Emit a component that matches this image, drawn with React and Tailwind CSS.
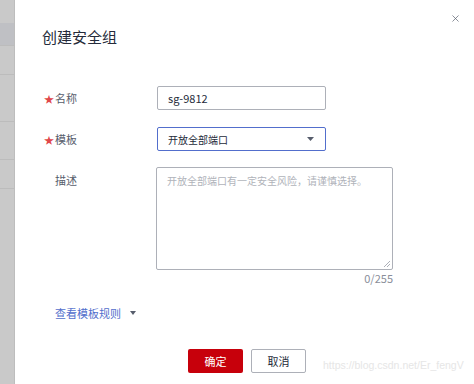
import { X } from 'lucide-react';

const font = { fontFamily: '"Noto Sans CJK SC", "Noto Sans", sans-serif' };

function Label({ required, children }) {
  return (
    <div className="flex w-[142px] shrink-0 items-center pl-[29px] text-[11px] text-[#575d6c]">
      <span className="w-[11px] text-[10px] text-[#e0474a]">{required ? '★' : ''}</span>
      <span>{children}</span>
    </div>
  );
}

export default function App() {
  return (
    <div className="relative flex h-[384px] w-[474px] overflow-hidden bg-white" style={font}>
      {/* backdrop strip of page underneath */}
      <div className="flex w-[15px] shrink-0 flex-col border-r border-[#bdbdbd] bg-[#c9c9c9]">
        <div className="mt-[23px] h-[23px] border-b border-[#bcbcbc] bg-[#bfc0c4]" />
        <div className="h-[29px] border-b border-[#bcbcbc]" />
        <div className="h-[47px] border-b border-[#bcbcbc]" />
        <div className="h-[38px] border-b border-[#bcbcbc]" />
        <div className="h-[29px] border-b border-[#bcbcbc]" />
      </div>

      <div className="flex min-w-0 flex-1 flex-col">
        <div className="pl-[27px] pt-[25px] text-[15px] leading-[24px] text-[#252b3a]">创建安全组</div>

        <div className="mt-[37px] flex h-[24px] items-center">
          <Label required>名称</Label>
          <div className="flex h-[24px] w-[169px] items-center rounded-[2px] border border-[#adb0b8] px-[10px] text-[11px] text-[#252b3a]">
            sg-9812
          </div>
        </div>

        <div className="mt-[17px] flex h-[24px] items-center">
          <Label required>模板</Label>
          <div className="flex h-[24px] w-[169px] items-center justify-between rounded-[2px] border border-[#526ecc] px-[10px] text-[10px] text-[#252b3a]">
            <span>开放全部端口</span>
            <svg width="7" height="4" viewBox="0 0 7 4" className="mr-[1px]">
              <path d="M0 0 L7 0 L3.5 4 Z" fill="#575d6c" />
            </svg>
          </div>
        </div>

        <div className="mt-[16px] flex items-start">
          <div className="pt-[5px]">
            <Label>描述</Label>
          </div>
          <div className="-ml-[1px] flex flex-col items-end">
            <div className="relative h-[103px] w-[237px] rounded-[2px] border border-[#adb0b8] px-[10px] pt-[5px] text-[10px] leading-[16px] text-[#b0b3ba]">
              开放全部端口有一定安全风险，请谨慎选择。
              <svg width="6" height="6" viewBox="0 0 6 6" className="absolute bottom-[2px] right-[2px]">
                <path d="M6 0 L0 6 M6 3 L3 6" stroke="#adb0b8" strokeWidth="1" />
              </svg>
            </div>
            <div className="text-[11px] leading-[16px] text-[#8a8e99]">0/255</div>
          </div>
        </div>

        <div className="ml-[40px] mt-[19px] flex items-center gap-[9px] text-[11px] leading-[16px] text-[#526ecc]">
          <span>查看模板规则</span>
          <svg width="6" height="4" viewBox="0 0 6 4">
            <path d="M0 0 L6 0 L3 4 Z" fill="#575d6c" />
          </svg>
        </div>

        <div className="mt-[27px] flex items-center">
          <button className="ml-[173px] h-[24px] w-[55px] shrink-0 rounded-[2px] bg-[#c7000b] text-[11px] text-white">
            确定
          </button>
          <button className="ml-[8px] h-[24px] w-[55px] shrink-0 rounded-[2px] border border-[#adb0b8] bg-white text-[11px] text-[#252b3a]">
            取消
          </button>
          <span
            className="ml-[17px] mt-[10px] whitespace-nowrap text-[10.5px] text-[#e6e6e6]"
            style={{ fontFamily: '"Liberation Sans", sans-serif' }}
          >
            https://blog.csdn.net/Er_fengV
          </span>
        </div>
      </div>

      <X className="absolute right-[13px] top-[13px] h-[11px] w-[11px] text-[#575d6c]" strokeWidth={1.5} />
    </div>
  );
}
